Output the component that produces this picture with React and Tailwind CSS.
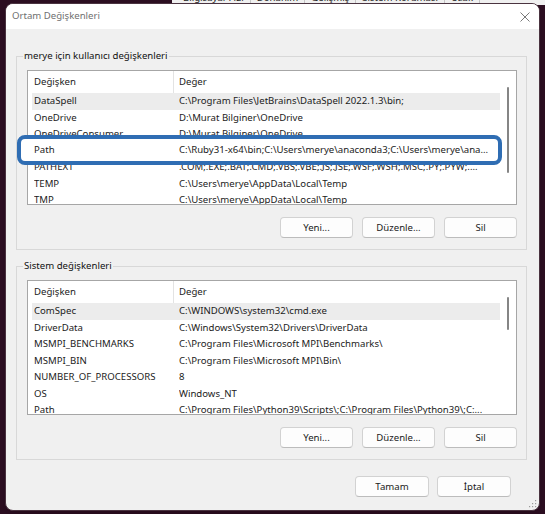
const USER_VARS = [
  ['DataSpell', 'C:\\Program Files\\JetBrains\\DataSpell 2022.1.3\\bin;'],
  ['OneDrive', 'D:\\Murat Bilginer\\OneDrive'],
  ['OneDriveConsumer', 'D:\\Murat Bilginer\\OneDrive'],
  ['Path', 'C:\\Ruby31-x64\\bin;C:\\Users\\merye\\anaconda3;C:\\Users\\merye\\ana...'],
  ['PATHEXT', '.COM;.EXE;.BAT;.CMD;.VBS;.VBE;.JS;.JSE;.WSF;.WSH;.MSC;.PY;.PYW;....'],
  ['TEMP', 'C:\\Users\\merye\\AppData\\Local\\Temp'],
  ['TMP', 'C:\\Users\\merye\\AppData\\Local\\Temp'],
]

const SYSTEM_VARS = [
  ['ComSpec', 'C:\\WINDOWS\\system32\\cmd.exe'],
  ['DriverData', 'C:\\Windows\\System32\\Drivers\\DriverData'],
  ['MSMPI_BENCHMARKS', 'C:\\Program Files\\Microsoft MPI\\Benchmarks\\'],
  ['MSMPI_BIN', 'C:\\Program Files\\Microsoft MPI\\Bin\\'],
  ['NUMBER_OF_PROCESSORS', '8'],
  ['OS', 'Windows_NT'],
  ['Path', 'C:\\Program Files\\Python39\\Scripts\\;C:\\Program Files\\Python39\\;C:...'],
]

const TABS = ['Bilgisayar Adı', 'Donanım', 'Gelişmiş', 'Sistem Koruması', 'Uzak']

function WinButton({ children, className = '' }) {
  return (
    <button className={`h-[21px] rounded-[4px] border border-[#d2d2d2] border-b-[#bcbcbc] bg-[#fdfdfd] text-[#1b1b1b] leading-none ${className}`}>
      {children}
    </button>
  )
}

function VarList({ rows, thumbTop, thumbHeight, children }) {
  return (
    <div className="relative">
      <div className="relative h-[135px] overflow-hidden border border-[#a6a6a6] bg-white">
        {/* header */}
        <div className="flex h-[22px] items-center pl-[4px]">
          <div className="flex h-full w-[141px] items-center pl-[2px]">Değişken</div>
          <div className="h-full w-px bg-[#e3e3e3]" />
          <div className="pl-[5px]">Değer</div>
        </div>
        {/* rows */}
        <div className="pl-[4px]">
          {rows.map(([name, value], i) => (
            <div
              key={name + i}
              className={`flex h-[16.5px] w-[468px] items-center whitespace-nowrap pl-[2px] ${i === 0 ? 'bg-[#ececec]' : ''}`}
            >
              <div className="w-[145px] shrink-0 overflow-hidden">{name}</div>
              <div className="overflow-hidden">{value}</div>
            </div>
          ))}
        </div>
        {/* scrollbar thumb */}
        <div
          className="absolute right-[7px] w-[2px] rounded-full bg-[#858585]"
          style={{ top: thumbTop, height: thumbHeight }}
        />
      </div>
      {children}
    </div>
  )
}

function GroupBox({ label, children }) {
  return (
    <div className="relative h-[194px] border border-[#d8d8d8] pl-[10px] pr-[9px] pt-[13px]">
      <span className="absolute left-[6px] top-[-8px] bg-[#f0f0f0] px-px leading-[14px] text-[#111]">{label}</span>
      {children}
      <div className="mt-[12px] flex justify-end gap-[9px]">
        <WinButton className="w-[73px]">Yeni...</WinButton>
        <WinButton className="w-[73px]">Düzenle...</WinButton>
        <WinButton className="w-[73px]">Sil</WinButton>
      </div>
    </div>
  )
}

export default function App() {
  return (
    <div className="relative h-[514px] w-[545px] overflow-hidden bg-[#2c0e21] pl-[5px] pt-[3px] font-['Noto_Sans',sans-serif] text-[9.6px] text-[#1b1b1b]">
      {/* window behind the dialog */}
      <div className="absolute left-[172px] right-0 top-[-9px] flex h-[14px] items-center bg-[#f0f0f0] pl-[5px] text-[#222]">
        {TABS.map(t => (
          <span key={t} className="border-r border-[#c4c4c4] px-[6px] leading-[12px]">{t}</span>
        ))}
      </div>

      {/* dialog */}
      <div className="relative z-10 flex h-[508px] w-[535px] flex-col overflow-hidden rounded-[8px] border border-[#4a3340] bg-[#f0f0f0] shadow-lg">
        <div className="flex h-[25px] shrink-0 items-center justify-between bg-white pl-[6px] pr-[9px]">
          <span className="text-[#6f6f6f]">Ortam Değişkenleri</span>
          <svg viewBox="0 0 10 10" className="h-[10px] w-[10px]" stroke="#6a6a6a" strokeWidth="0.9">
            <path d="M0.5 0.5L9.5 9.5M9.5 0.5L0.5 9.5" />
          </svg>
        </div>

        <div className="flex flex-col pl-[10px] pr-[12px] pt-[27px]">
          <GroupBox label="merye için kullanıcı değişkenleri">
            <VarList rows={USER_VARS} thumbTop={16} thumbHeight={86}>
              {/* highlighted Path row annotation */}
              <div className="absolute left-[-10px] top-[65px] flex h-[30px] w-[485px] items-center overflow-hidden whitespace-nowrap rounded-[8px] border-[4px] border-[#2f6db3] bg-white pl-[13px]">
                <div className="w-[145px] shrink-0">Path</div>
                <div className="overflow-hidden">C:\Ruby31-x64\bin;C:\Users\merye\anaconda3;C:\Users\merye\ana...</div>
              </div>
            </VarList>
          </GroupBox>

          <div className="mt-[16px]">
            <GroupBox label="Sistem değişkenleri">
              <VarList rows={SYSTEM_VARS} thumbTop={16} thumbHeight={33} />
            </GroupBox>
          </div>

          <div className="mr-[16px] mt-[16px] flex justify-end gap-[8px]">
            <WinButton className="w-[74px]">Tamam</WinButton>
            <WinButton className="w-[74px]">İptal</WinButton>
          </div>
        </div>

        {/* resize grip */}
        <svg viewBox="0 0 9 9" className="absolute bottom-[2px] right-[2px] h-[9px] w-[9px]" fill="#9a9a9a">
          <rect x="7" y="1" width="1.2" height="1.2" />
          <rect x="4" y="4" width="1.2" height="1.2" />
          <rect x="7" y="4" width="1.2" height="1.2" />
          <rect x="1" y="7" width="1.2" height="1.2" />
          <rect x="4" y="7" width="1.2" height="1.2" />
          <rect x="7" y="7" width="1.2" height="1.2" />
        </svg>
      </div>
    </div>
  )
}
